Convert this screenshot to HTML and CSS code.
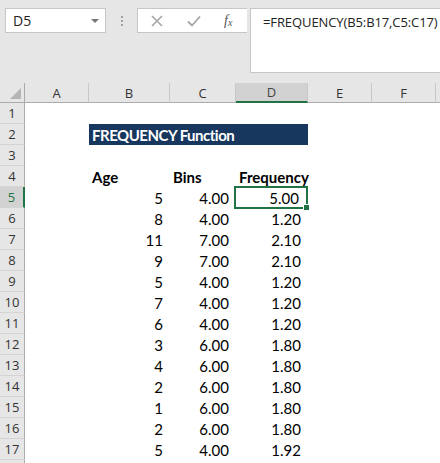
FILE: index.html
```html
<!DOCTYPE html>
<html>
<head>
<meta charset="utf-8">
<link rel="stylesheet" href="styles.css">
</head>
<body>
<div class="app">
  <div class="toolbar">
    <div class="namebox"><span class="nb-text">D5</span><span class="nb-arrow"></span></div>
    <div class="grip"><i></i><i></i><i></i></div>
    <div class="fbtns">
      <svg class="ic-x" width="12" height="12" viewBox="0 0 12 12"><path d="M1 1 L11 11 M11 1 L1 11" stroke="#a6a6a6" stroke-width="1.6" fill="none"/></svg>
      <svg class="ic-ok" width="14" height="12" viewBox="0 0 14 12"><path d="M1 6.5 L5 10.5 L13 1.5" stroke="#a6a6a6" stroke-width="1.8" fill="none"/></svg>
      <span class="fx">f<sub>x</sub></span>
    </div>
    <div class="formula">=FREQUENCY(B5:B17,C5:C17)</div>
  </div>
  <div class="sheet">
    <div class="hdr corner"><span class="tri"></span></div>
    <div class="hdr col">A</div>
    <div class="hdr col">B</div>
    <div class="hdr col">C</div>
    <div class="hdr col sel">D</div>
    <div class="hdr col">E</div>
    <div class="hdr col">F</div>
    <div class="hdr col last"></div>

    <div class="hdr row">1</div><div class="c"></div><div class="c"></div><div class="c"></div><div class="c"></div><div class="c"></div><div class="c"></div><div class="c"></div>
    <div class="hdr row">2</div><div class="c"></div><div class="c title">FREQUENCY Function</div><div class="c"></div><div class="c"></div><div class="c"></div>
    <div class="hdr row">3</div><div class="c"></div><div class="c"></div><div class="c"></div><div class="c"></div><div class="c"></div><div class="c"></div><div class="c"></div>
    <div class="hdr row">4</div><div class="c"></div><div class="c b">Age</div><div class="c b">Bins</div><div class="c b">Frequency</div><div class="c"></div><div class="c"></div><div class="c"></div>
    <div class="hdr row sel">5</div><div class="c"></div><div class="c n">5</div><div class="c n">4.00</div><div class="c n active">5.00<span class="handle"></span></div><div class="c"></div><div class="c"></div><div class="c"></div>
    <div class="hdr row">6</div><div class="c"></div><div class="c n">8</div><div class="c n">4.00</div><div class="c n">1.20</div><div class="c"></div><div class="c"></div><div class="c"></div>
    <div class="hdr row">7</div><div class="c"></div><div class="c n">11</div><div class="c n">7.00</div><div class="c n">2.10</div><div class="c"></div><div class="c"></div><div class="c"></div>
    <div class="hdr row">8</div><div class="c"></div><div class="c n">9</div><div class="c n">7.00</div><div class="c n">2.10</div><div class="c"></div><div class="c"></div><div class="c"></div>
    <div class="hdr row">9</div><div class="c"></div><div class="c n">5</div><div class="c n">4.00</div><div class="c n">1.20</div><div class="c"></div><div class="c"></div><div class="c"></div>
    <div class="hdr row">10</div><div class="c"></div><div class="c n">7</div><div class="c n">4.00</div><div class="c n">1.20</div><div class="c"></div><div class="c"></div><div class="c"></div>
    <div class="hdr row">11</div><div class="c"></div><div class="c n">6</div><div class="c n">4.00</div><div class="c n">1.20</div><div class="c"></div><div class="c"></div><div class="c"></div>
    <div class="hdr row">12</div><div class="c"></div><div class="c n">3</div><div class="c n">6.00</div><div class="c n">1.80</div><div class="c"></div><div class="c"></div><div class="c"></div>
    <div class="hdr row">13</div><div class="c"></div><div class="c n">4</div><div class="c n">6.00</div><div class="c n">1.80</div><div class="c"></div><div class="c"></div><div class="c"></div>
    <div class="hdr row">14</div><div class="c"></div><div class="c n">2</div><div class="c n">6.00</div><div class="c n">1.80</div><div class="c"></div><div class="c"></div><div class="c"></div>
    <div class="hdr row">15</div><div class="c"></div><div class="c n">1</div><div class="c n">6.00</div><div class="c n">1.80</div><div class="c"></div><div class="c"></div><div class="c"></div>
    <div class="hdr row">16</div><div class="c"></div><div class="c n">2</div><div class="c n">6.00</div><div class="c n">1.80</div><div class="c"></div><div class="c"></div><div class="c"></div>
    <div class="hdr row">17</div><div class="c"></div><div class="c n">5</div><div class="c n">4.00</div><div class="c n">1.92</div><div class="c"></div><div class="c"></div><div class="c"></div>
    <div class="hdr row"></div><div class="c"></div><div class="c"></div><div class="c"></div><div class="c"></div><div class="c"></div><div class="c"></div><div class="c"></div>
  </div>
</div>
</body>
</html>
```
FILE: styles.css
```css
html, body {
  margin: 0;
  padding: 0;
  background: #e6e6e6;
  overflow: hidden;
}
.app {
  width: 440px;
  height: 463px;
  overflow: hidden;
}
.toolbar {
  height: 83px;
  display: flex;
  align-items: flex-start;
  padding-top: 8px;
  box-sizing: border-box;
  font-family: "Open Sans", "Noto Sans", sans-serif;
}
.namebox {
  margin-left: 5px;
  width: 101px;
  height: 25px;
  box-sizing: border-box;
  border: 1px solid #c6c6c6;
  background: #fff;
  display: flex;
  align-items: center;
  justify-content: space-between;
  padding: 0 6px 0 7px;
}
.nb-text {
  font-size: 14px;
  color: #222;
}
.nb-arrow {
  width: 0;
  height: 0;
  border-left: 4px solid transparent;
  border-right: 4px solid transparent;
  border-top: 4px solid #777;
}
.grip {
  width: 31px;
  height: 25px;
  display: flex;
  flex-direction: column;
  align-items: center;
  justify-content: center;
  gap: 2px;
}
.grip i {
  width: 2px;
  height: 2px;
  background: #a0a0a0;
}
.fbtns {
  width: 110px;
  height: 25px;
  box-sizing: border-box;
  border: 1px solid #c6c6c6;
  border-right: none;
  background: #fff;
  display: flex;
  align-items: center;
  padding-left: 13px;
}
.ic-x { margin-right: 24px; }
.ic-ok { margin-right: 23px; }
.fx {
  font-family: "Liberation Serif", serif;
  font-style: italic;
  font-size: 14px;
  color: #555;
}
.fx sub {
  font-size: 10px;
  vertical-align: -1px;
}
.formula {
  margin-left: 3px;
  flex: 1;
  height: 65px;
  box-sizing: border-box;
  border: 1px solid #c6c6c6;
  border-right: none;
  background: #fff;
  padding: 4px 0 0 12px;
  font-size: 13px;
  letter-spacing: -0.1px;
  color: #222;
  white-space: nowrap;
  overflow: hidden;
}
.sheet {
  display: grid;
  grid-template-columns: 25px 64px 81px 66px 72px 64px 64px 4px;
  grid-template-rows: 20px repeat(18, 21px);
  background: #fff;
}
.hdr {
  background: #e6e6e6;
  font-family: "Open Sans", "Noto Sans", sans-serif;
  font-size: 13px;
  color: #333;
  display: flex;
  align-items: center;
  justify-content: center;
  box-sizing: border-box;
}
.hdr.col {
  border-right: 1px solid #c8c8c8;
  border-bottom: 1px solid #ababab;
}
.hdr.col.last { border-right: none; }
.hdr.col.sel {
  background: #d2d2d2;
  border-bottom: 2px solid #217346;
  color: #444;
}
.corner {
  border-right: 1px solid #ababab;
  border-bottom: 1px solid #ababab;
  position: relative;
}
.tri {
  position: absolute;
  right: 3px;
  bottom: 3px;
  width: 0;
  height: 0;
  border-left: 11px solid transparent;
  border-bottom: 11px solid #b4b4b4;
}
.hdr.row {
  border-right: 1px solid #ababab;
  border-bottom: 1px solid #d4d4d4;
  font-size: 13px;
}
.hdr.row.sel {
  background: #d2d2d2;
  border-right: 2px solid #217346;
  color: #217346;
}
.c {
  font-family: "Lato", "Liberation Sans", sans-serif;
  font-size: 15px;
  color: #000;
  display: flex;
  align-items: center;
  padding: 0 3px;
  box-sizing: border-box;
  white-space: nowrap;
  min-width: 0;
}
.c.b { font-weight: bold; }
.c.n {
  justify-content: flex-end;
  padding-right: 7px;
}
.c.title {
  grid-column: span 3;
  background: #17375e;
  color: #fff;
  font-weight: bold;
  letter-spacing: -0.5px;
}
.c.active {
  position: relative;
  border: 2px solid #217346;
  padding-right: 7px;
  margin: -1px 0 -1px -2px;
}
.handle {
  position: absolute;
  right: -4px;
  bottom: -4px;
  width: 5px;
  height: 5px;
  background: #217346;
  border: 1px solid #fff;
}
```
